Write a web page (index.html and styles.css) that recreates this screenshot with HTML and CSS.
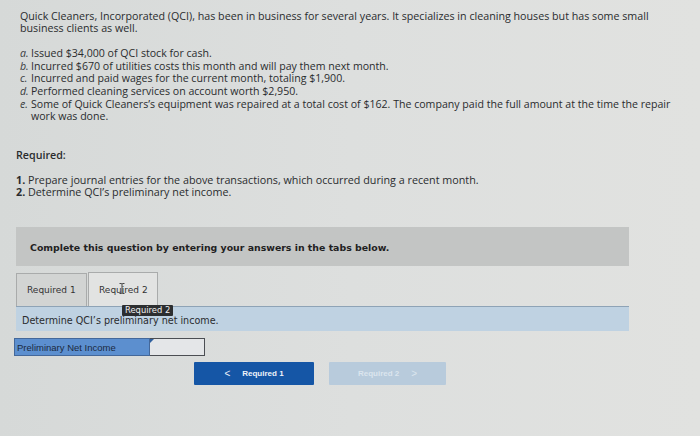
FILE: index.html
```html
<!DOCTYPE html>
<html>
<head>
<meta charset="utf-8">
<link rel="stylesheet" href="styles.css">
</head>
<body>
<div class="page">
  <p class="intro">Quick Cleaners, Incorporated (QCI), has been in business for several years. It specializes in cleaning houses but has some small business clients as well.</p>
  <ol class="trans">
    <li><span class="mk">a.</span><span>Issued $34,000 of QCI stock for cash.</span></li>
    <li><span class="mk">b.</span><span>Incurred $670 of utilities costs this month and will pay them next month.</span></li>
    <li><span class="mk">c.</span><span>Incurred and paid wages for the current month, totaling $1,900.</span></li>
    <li><span class="mk">d.</span><span>Performed cleaning services on account worth $2,950.</span></li>
    <li><span class="mk">e.</span><span>Some of Quick Cleaners’s equipment was repaired at a total cost of $162. The company paid the full amount at the time the repair work was done.</span></li>
  </ol>
  <div class="req-title">Required:</div>
  <ol class="reqs">
    <li><span class="num">1.</span><span>Prepare journal entries for the above transactions, which occurred during a recent month.</span></li>
    <li><span class="num">2.</span><span>Determine QCI’s preliminary net income.</span></li>
  </ol>
  <div class="panel">
    <div class="instruct">Complete this question by entering your answers in the tabs below.</div>
    <div class="tabs">
      <div class="tab">Required 1</div>
      <div class="tab active">Required 2<svg class="ibeam" width="6" height="11" viewBox="0 0 6 11"><path d="M0.5 0.5h2l0.5 0.6 0.5-0.6h2M3 1v9M0.5 10.5h2l0.5-0.6 0.5 0.6h2" fill="none" stroke="#333" stroke-width="0.9"/></svg></div>
    </div>
    <div class="tabbody">
      Determine QCI’s preliminary net income.
      <div class="tooltip">Required 2</div>
    </div>
    <div class="field">
      <div class="flabel">Preliminary Net Income</div>
      <div class="finput"></div>
    </div>
    <div class="nav">
      <div class="btn prev"><span class="chev">&lt;</span>Required 1</div>
      <div class="btn next">Required 2<span class="chev">&gt;</span></div>
    </div>
  </div>
</div>
</body>
</html>
```
FILE: styles.css
```css
html, body {
  margin: 0;
  padding: 0;
}
body {
  width: 700px;
  height: 436px;
  overflow: hidden;
  background: linear-gradient(90deg, #d6d9d8 0%, #dddfde 50%, #e1e2e0 100%);
  font-family: "Open Sans", "Liberation Sans", sans-serif;
  color: #2a2c2e;
}
.page {
  padding: 10px 0 0 0;
}
.intro {
  margin: 0 0 0 20px;
  width: 640px;
  font-size: 10.7px;
  line-height: 12.2px;
}
.trans {
  list-style: none;
  margin: 12.4px 0 0 20px;
  padding: 0;
  width: 664px;
  font-size: 10.6px;
  line-height: 12.7px;
}
.trans li {
  display: flex;
}
.trans .mk {
  flex: 0 0 11px;
  font-style: italic;
  color: #3a3c3e;
}
.trans li span:last-child {
  flex: 1;
}
.req-title {
  margin: 25.9px 0 0 16px;
  font-weight: 600;
  font-size: 10.7px;
  line-height: 12px;
}
.reqs {
  list-style: none;
  margin: 12.6px 0 0 16px;
  padding: 0;
  font-size: 10.75px;
  line-height: 12.7px;
}
.reqs li {
  display: flex;
}
.reqs .num {
  flex: 0 0 12px;
  font-weight: bold;
}
.panel {
  margin: 28.4px 0 0 16px;
  width: 613px;
  font-family: "DejaVu Sans", Verdana, sans-serif;
}
.instruct {
  background: #c3c5c4;
  height: 39px;
  display: flex;
  align-items: center;
  padding: 2px 0 0 14px;
  box-sizing: border-box;
  font-weight: bold;
  font-size: 9.4px;
  color: #1f2122;
}
.tabs {
  display: flex;
  margin-top: 6px;
  height: 34px;
  align-items: flex-end;
}
.tab {
  position: relative;
  height: 33px;
  box-sizing: border-box;
  display: flex;
  align-items: center;
  padding: 0 10px;
  font-size: 9px;
  white-space: nowrap;
  color: #333;
  background: #d2d4d3;
  border: 1px solid #a9abab;
  border-bottom: none;
  width: 71px;
}
.tab.active {
  background: #e2e3e2;
  height: 34px;
  width: 70px;
  margin-left: 1px;
}
.ibeam {
  position: absolute;
  left: 30px;
  top: 10px;
}
.tabbody {
  position: relative;
  background: #bfd2e2;
  border-top: 1px solid #8ea3b6;
  height: 25px;
  box-sizing: border-box;
  display: flex;
  align-items: center;
  padding: 3px 0 0 6px;
  font-size: 9.6px;
  color: #2a2c2e;
}
.tooltip {
  position: absolute;
  left: 106px;
  top: -2px;
  background: #2c2e30;
  color: #f0f0f0;
  font-size: 8.4px;
  line-height: 11px;
  padding: 0 3px;
  border-radius: 1px;
}
.field {
  display: flex;
  margin: 7px 0 0 -2px;
  height: 18px;
}
.flabel {
  width: 136px;
  box-sizing: border-box;
  background: #5c8fcf;
  border: 1px solid #44689a;
  display: flex;
  align-items: center;
  padding-left: 2px;
  font-family: "Liberation Sans", Arial, sans-serif;
  font-size: 9.5px;
  color: #1b2a40;
}
.finput {
  position: relative;
  width: 55px;
  box-sizing: border-box;
  background: #e4e6e8;
  border: 1px solid #4b4e53;
  border-left: none;
}
.finput::before {
  content: "";
  position: absolute;
  left: 0;
  top: 0;
  border-left: 4px solid #2e5f9e;
  border-bottom: 4px solid transparent;
}
.nav {
  display: flex;
  gap: 15px;
  margin: 6px 0 0 178px;
}
.btn {
  width: 120px;
  height: 23px;
  display: flex;
  align-items: center;
  justify-content: center;
  font-family: "Liberation Sans", Arial, sans-serif;
  font-weight: bold;
  font-size: 8px;
  border-radius: 1px;
}
.btn.prev {
  background: #1556a6;
  color: #eef3fa;
}
.btn.prev .chev {
  margin-right: 12px;
  font-weight: normal;
  font-size: 10px;
}
.btn.next {
  width: 117px;
  background: #b8cbdc;
  color: #dbe5ee;
}
.btn.next .chev {
  margin-left: 12px;
  font-weight: normal;
  font-size: 10px;
}
```
